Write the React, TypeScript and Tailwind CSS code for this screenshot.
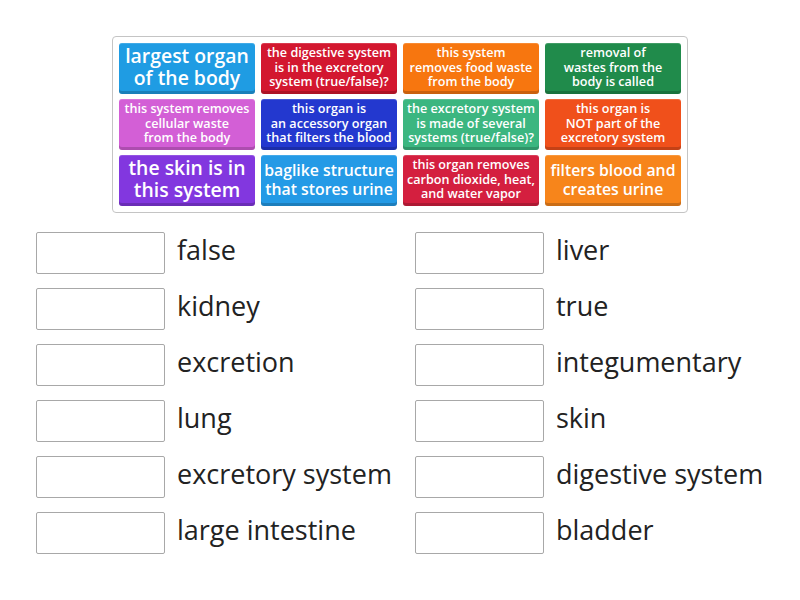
import React from 'react';

type Tile = { text: string[]; bg: string; size: string };

const small = 'text-[12.6px] leading-[14.5px] pb-[1px]';
const big = 'text-[19.4px] leading-[22px] pb-[3px]';
const mid = 'text-[15.8px] leading-[19px] pb-[2px]';

const tiles: Tile[] = [
  { text: ['largest organ', 'of the body'], bg: 'bg-[#1f9ce3]', size: big },
  { text: ['the digestive system', 'is in the excretory', 'system (true/false)?'], bg: 'bg-[#d3172f]', size: small },
  { text: ['this system', 'removes food waste', 'from the body'], bg: 'bg-[#f7760f]', size: small },
  { text: ['removal of', 'wastes from the', 'body is called'], bg: 'bg-[#208b4b]', size: small },
  { text: ['this system removes', 'cellular waste', 'from the body'], bg: 'bg-[#d35fd6]', size: small },
  { text: ['this organ is', 'an accessory organ', 'that filters the blood'], bg: 'bg-[#2338cf]', size: small },
  { text: ['the excretory system', 'is made of several', 'systems (true/false)?'], bg: 'bg-[#3bb680]', size: small },
  { text: ['this organ is', 'NOT part of the', 'excretory system'], bg: 'bg-[#f0501b]', size: small },
  { text: ['the skin is in', 'this system'], bg: 'bg-[#8237df]', size: big },
  { text: ['baglike structure', 'that stores urine'], bg: 'bg-[#249ae6]', size: mid },
  { text: ['this organ removes', 'carbon dioxide, heat,', 'and water vapor'], bg: 'bg-[#d41f3f]', size: small },
  { text: ['filters blood and', 'creates urine'], bg: 'bg-[#f7851b]', size: mid },
];

const left = ['false', 'kidney', 'excretion', 'lung', 'excretory system', 'large intestine'];
const right = ['liver', 'true', 'integumentary', 'skin', 'digestive system', 'bladder'];

const Row = ({ label }: { label: string }) => (
  <div className="flex items-center h-[42px]">
    <div className="w-[129px] h-[42px] border border-[#a8a8a8] rounded-[2px] bg-white shrink-0" />
    <span className="ml-[12px] -mt-[6px] text-[27px] text-[#222] whitespace-nowrap">{label}</span>
  </div>
);

export default function App() {
  return (
    <div className="w-[800px] h-[600px] bg-white" style={{ fontFamily: '"Open Sans", sans-serif' }}>
      <div className="pt-[36px] flex justify-center">
        <div className="w-[576px] border border-[#c4c4c4] rounded-[4px] p-[6px] grid grid-cols-4 gap-x-[6px] gap-y-[5px]">
          {tiles.map((t, i) => (
            <div
              key={i}
              className={`${t.bg} ${t.size} h-[51px] rounded-[3px] flex flex-col items-center justify-center text-white font-semibold text-center shadow-[inset_0_-3px_0_rgba(0,0,0,0.18),inset_0_1px_0_rgba(255,255,255,0.15)]`}
            >
              {t.text.map((l, j) => (
                <span key={j} className="whitespace-nowrap">{l}</span>
              ))}
            </div>
          ))}
        </div>
      </div>
      <div className="pl-[36px] pt-[19px] grid grid-cols-[379px_379px]">
        <div className="flex flex-col gap-[14px]">
          {left.map((l) => <Row key={l} label={l} />)}
        </div>
        <div className="flex flex-col gap-[14px]">
          {right.map((l) => <Row key={l} label={l} />)}
        </div>
      </div>
    </div>
  );
}
